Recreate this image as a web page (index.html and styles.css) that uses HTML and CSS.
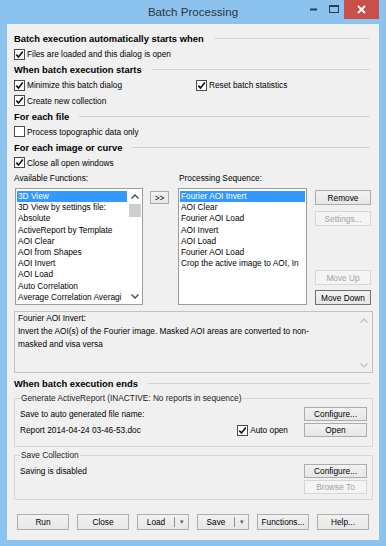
FILE: index.html
```html
<!DOCTYPE html>
<html lang="en">
<head>
  <meta charset="UTF-8" />
  <title>Batch Processing</title>
  <link rel="stylesheet" href="styles.css">
</head>
<body>

<div class="window">
  <div class="titlebar">
    <span></span>
    <span class="title">Batch Processing</span>
    <div class="controls">
      <span class="ctl"><svg width="8" height="3" viewBox="0 0 8 3"><rect width="7" height="2" y="0.5" fill="#2f3e4e"/></svg></span>
      <span class="ctl"><svg width="10" height="9" viewBox="0 0 10 9"><rect x="0.5" y="0.5" width="9" height="7" fill="none" stroke="#2f3e4e"/><rect x="0.5" y="0.5" width="9" height="1.5" fill="#2f3e4e"/></svg></span>
      <span class="ctl close"><svg width="9" height="9" viewBox="0 0 9 9"><path d="M1 1 L8 8 M8 1 L1 8" stroke="#fff" stroke-width="1.8"/></svg></span>
    </div>
  </div>

  <div class="content">
    <div class="row heading">Batch execution automatically starts when</div>
    <div class="row"><span class="box on"></span>Files are loaded and this dialog is open</div>

    <div class="row heading">When batch execution starts</div>
    <div class="row">
      <span class="half"><span class="box on"></span>Minimize this batch dialog</span>
      <span class="box on"></span>Reset batch statistics
    </div>
    <div class="row"><span class="box on"></span>Create new collection</div>

    <div class="row heading">For each file</div>
    <div class="row"><span class="box"></span>Process topographic data only</div>

    <div class="row heading">For each image or curve</div>
    <div class="row"><span class="box on"></span>Close all open windows</div>

    <div class="row">
      <span class="lbl-left">Available Functions:</span>
      <span>Processing Sequence:</span>
    </div>

    <div class="lists">
      <div class="list list-left">
        <div class="items">
          <div class="item sel">3D View</div>
          <div class="item">3D View by settings file:</div>
          <div class="item">Absolute</div>
          <div class="item">ActiveReport by Template</div>
          <div class="item">AOI Clear</div>
          <div class="item">AOI from Shapes</div>
          <div class="item">AOI Invert</div>
          <div class="item">AOI Load</div>
          <div class="item">Auto Correlation</div>
          <div class="item">Average Correlation Averagi</div>
        </div>
        <div class="sb">
          <span class="arrow"><svg width="8" height="5" viewBox="0 0 8 5"><path d="M0.5 4.5 L4 1 L7.5 4.5" fill="none" stroke="#444" stroke-width="1.3"/></svg></span>
          <span class="thumb"></span>
          <span class="track"></span>
          <span class="arrow"><svg width="8" height="5" viewBox="0 0 8 5"><path d="M0.5 0.5 L4 4 L7.5 0.5" fill="none" stroke="#444" stroke-width="1.3"/></svg></span>
        </div>
      </div>

      <button class="btn add">&gt;&gt;</button>

      <div class="list list-right">
        <div class="items">
          <div class="item sel">Fourier AOI Invert</div>
          <div class="item">AOI Clear</div>
          <div class="item">Fourier AOI Load</div>
          <div class="item">AOI Invert</div>
          <div class="item">AOI Load</div>
          <div class="item">Fourier AOI Load</div>
          <div class="item">Crop the active image to AOI, In</div>
        </div>
      </div>

      <div class="seq-buttons">
        <button class="btn">Remove</button>
        <button class="btn" disabled>Settings...</button>
        <button class="btn push" disabled>Move Up</button>
        <button class="btn focus">Move Down</button>
      </div>
    </div>

    <div class="desc">
      <div class="desc-text">
        Fourier AOI Invert:<br>
        Invert the AOI(s) of the Fourier image. Masked AOI areas are converted to non-<br>
        masked and visa versa
      </div>
      <div class="desc-sb">
        <svg width="8" height="5" viewBox="0 0 8 5"><path d="M0.5 4.5 L4 1 L7.5 4.5" fill="none" stroke="#bdbdbd" stroke-width="1.2"/></svg>
        <svg width="8" height="5" viewBox="0 0 8 5"><path d="M0.5 0.5 L4 4 L7.5 0.5" fill="none" stroke="#bdbdbd" stroke-width="1.2"/></svg>
      </div>
    </div>

    <div class="row heading ends">When batch execution ends</div>

    <fieldset class="group">
      <legend>Generate ActiveReport (INACTIVE: No reports in sequence)</legend>
      <div class="frow">
        <span class="grow">Save to auto generated file name:</span>
        <button class="btn side">Configure...</button>
      </div>
      <div class="frow second">
        <span class="grow">Report 2014-04-24 03-46-53.doc</span>
        <span class="auto"><span class="box on"></span>Auto open</span>
        <button class="btn side">Open</button>
      </div>
    </fieldset>

    <fieldset class="group save">
      <legend>Save Collection</legend>
      <div class="frow">
        <span class="grow">Saving is disabled</span>
        <button class="btn side">Configure...</button>
      </div>
      <div class="frow third">
        <span class="grow"></span>
        <button class="btn side" disabled>Browse To</button>
      </div>
    </fieldset>

    <div class="footer">
      <button class="btn foot">Run</button>
      <button class="btn foot">Close</button>
      <button class="btn foot split"><span class="split-lbl">Load</span><span class="sep"></span><span class="drop">&#9662;</span></button>
      <button class="btn foot split"><span class="split-lbl">Save</span><span class="sep"></span><span class="drop">&#9662;</span></button>
      <button class="btn foot">Functions...</button>
      <button class="btn foot">Help...</button>
    </div>
  </div>
</div>

</body>
</html>
```

FILE: styles.css
```css
* { box-sizing: border-box; }

body {
  margin: 0;
  background: #8cc2ee;
  font-family: "Liberation Sans", Arial, sans-serif;
  font-size: 8.3px;
  color: #000;
}

.window {
  width: 386px;
  height: 546px;
}

/* title bar */
.titlebar {
  height: 24px;
  display: grid;
  grid-template-columns: 1fr auto 1fr;
}

.title {
  font-size: 11.6px;
  line-height: 24px;
  color: #2b3440;
}

.controls {
  justify-self: end;
  display: flex;
  margin-right: 7px;
}

.ctl {
  width: 20px;
  height: 19px;
  display: flex;
  align-items: center;
  justify-content: center;
}

.ctl.close {
  width: 35px;
  background: #c9504a;
}

/* dialog body */
.content {
  margin-left: 7px;
  width: 372px;
  height: 516px;
  background: #f0f0f0;
  padding: 7px 6px 0 7px;
}

.row {
  height: 15.5px;
  display: flex;
  align-items: center;
  white-space: nowrap;
}

.heading {
  font-weight: bold;
  font-size: 9.4px;
}

.heading::after {
  content: "";
  flex: 1;
  height: 1px;
  background: #d2d2d2;
  margin: 0 3px 0 10px;
}

.ends { margin-top: 2.5px; }

.box {
  width: 11px;
  height: 11px;
  border: 1px solid #4a4a4a;
  background: #fff;
  margin-right: 2px;
  flex-shrink: 0;
}

.box.on {
  background: #fff url("data:image/svg+xml,%3Csvg xmlns='http://www.w3.org/2000/svg' width='9' height='9' viewBox='0 0 9 9'%3E%3Cpath d='M1.3 4.6 L3.5 7 L7.8 1.6' fill='none' stroke='%23111' stroke-width='1.6'/%3E%3C/svg%3E") center no-repeat;
}

.half {
  display: flex;
  align-items: center;
  width: 182px;
}

.lbl-left { width: 165px; }

/* lists */
.lists {
  display: flex;
  margin-top: 2px;
  height: 117px;
}

.list {
  background: #fff;
  border: 1px solid #9c9c9c;
  display: flex;
  overflow: hidden;
}

.list-left {
  width: 128px;
  margin-left: 1px;
}

.list-right {
  width: 129px;
  margin-left: 9px;
}

.items {
  flex: 1;
  min-width: 0;
  padding: 2px 1px 0 1px;
  overflow: hidden;
}

.item {
  height: 11.2px;
  line-height: 11.2px;
  padding-left: 1px;
  white-space: nowrap;
  overflow: hidden;
}

.item.sel {
  background: #3399ff;
  color: #fff;
}

.sb {
  width: 14px;
  flex-shrink: 0;
  display: flex;
  flex-direction: column;
  background: #fff;
}

.arrow {
  height: 15px;
  display: flex;
  align-items: center;
  justify-content: center;
}

.thumb {
  height: 13px;
  margin: 0 1px;
  background: #cdcdcd;
}

.track { flex: 1; }

/* buttons */
.btn {
  height: 15px;
  padding: 0;
  font: inherit;
  color: #000;
  border: 1px solid #acacac;
  background: linear-gradient(#f2f2f2, #e6e6e6);
  display: flex;
  align-items: center;
  justify-content: center;
  white-space: nowrap;
}

.btn:disabled {
  color: #a3a3a3;
  border-color: #d6d6d6;
  background: #f4f4f4;
}

.btn.focus { border-color: #707070; }

.add {
  width: 19px;
  height: 13px;
  margin: 3px 0 0 7px;
}

.seq-buttons {
  width: 56px;
  margin-left: 8px;
  display: flex;
  flex-direction: column;
  gap: 6px;
  padding-top: 2px;
}

.seq-buttons .push { margin-top: auto; margin-bottom: -1px; }

/* description */
.desc {
  margin-top: 6px;
  height: 62px;
  border: 1px solid #c2c2c2;
  display: flex;
}

.desc-text {
  flex: 1;
  padding: 0 3px;
  line-height: 13px;
}

.desc-sb {
  width: 16px;
  display: flex;
  flex-direction: column;
  justify-content: space-between;
  align-items: center;
  padding: 6px 0 4px;
}

/* group boxes */
.group {
  margin: 0;
  padding: 0 5px 8px;
  border: 1px solid #d6d6d6;
}

.group legend {
  padding: 0 1px;
  line-height: 15.5px;
  color: #222;
}

.group.save {
  margin-top: 1px;
  padding-bottom: 5px;
}

.frow {
  display: flex;
  align-items: center;
  height: 15px;
}

.frow.second { margin-top: 1px; }
.frow.third { margin-top: 2px; height: 14px; }

.grow { flex: 1; }

.auto {
  display: flex;
  align-items: center;
  margin-right: 16px;
}

.btn.side {
  width: 63px;
  height: 14px;
}

/* bottom row */
.footer {
  display: flex;
  gap: 8px;
  margin: 14px 0 0 3px;
}

.btn.foot {
  width: 52px;
  height: 16px;
}

.split { justify-content: flex-start; }

.split-lbl {
  flex: 1;
  text-align: center;
}

.sep {
  width: 1px;
  height: 10px;
  background: #8e8e8e;
}

.drop {
  width: 13px;
  font-size: 7px;
  color: #606060;
  text-align: center;
}
```
